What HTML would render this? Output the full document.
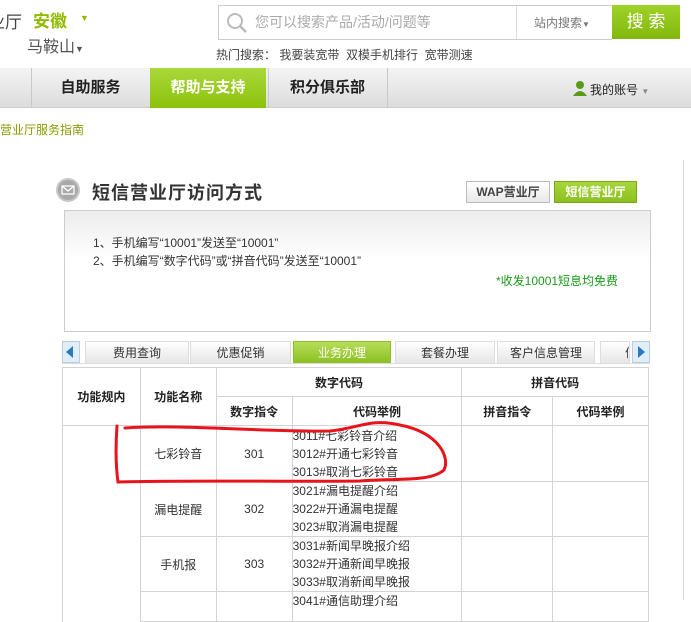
<!DOCTYPE html>
<html><head><meta charset="utf-8"><style>
*{margin:0;padding:0;box-sizing:border-box}
body{width:691px;height:600px;overflow:hidden;background:#fff;font-family:"Liberation Sans","Noto Sans CJK SC",sans-serif;font-size:12px;color:#333;position:relative}
.a{position:absolute;white-space:nowrap}
.nav{position:absolute;left:0;top:68px;width:691px;height:40px;background:linear-gradient(#f4f4f4,#dcdcdc);border-bottom:1px solid #ccc}
.nav .i{position:absolute;top:0;height:40px;line-height:40px;text-align:center;font-size:15px;font-weight:bold;color:#222}
.sep{position:absolute;top:0;width:1px;height:40px;background:#c8c8c8}
table{position:absolute;left:62px;top:367px;border-collapse:collapse;width:587px}
td{border:1px solid #d3d3d3;text-align:center;font-size:12px;color:#333}
th{border:1px solid #d3d3d3;font-size:12px;font-weight:bold;color:#222}
.c{text-align:left;line-height:18px;padding-left:0}
.tab{position:absolute;top:341px;height:22px;line-height:22px;text-align:center;font-size:12px;background:linear-gradient(#fff,#e6e6e6);border:1px solid #ddd;border-bottom:none}
</style></head><body>
<div class="a" style="left:-12px;top:8px;font-size:17px;color:#444">业厅</div>
<div class="a" style="left:33px;top:7px;font-size:17px;font-weight:bold;color:#8fbc00">安徽</div>
<div class="a" style="left:80px;top:13px;font-size:9px;color:#8fbc00">▼</div>
<div class="a" style="left:27px;top:33px;font-size:16px;color:#555">马鞍山<span style="font-size:9px">▼</span></div>

<div class="a" style="left:218px;top:5px;width:394px;height:35px;border:1px solid #ccc;border-right:none;background:#fff"></div>
<svg class="a" style="left:226px;top:12px" width="22" height="22"><circle cx="9" cy="9" r="7" fill="none" stroke="#bbb" stroke-width="2"/><line x1="14" y1="14" x2="20" y2="20" stroke="#bbb" stroke-width="2.5"/></svg>
<div class="a" style="left:255px;top:12px;font-size:14px;color:#aaa">您可以搜索产品/活动/问题等</div>
<div class="a" style="left:516px;top:6px;width:1px;height:33px;background:#ddd"></div>
<div class="a" style="left:534px;top:14px;font-size:12px;color:#777">站内搜索<span style="font-size:8px">▼</span></div>
<div class="a" style="left:612px;top:5px;width:68px;height:34px;background:linear-gradient(#9fd22a,#82b80c);color:#fff;font-size:17px;text-align:center;line-height:34px">搜 索</div>
<div class="a" style="left:216px;top:46px;font-size:12px;color:#444">热门搜索：&nbsp;我要装宽带&nbsp;&nbsp;双模手机排行&nbsp;&nbsp;宽带测速</div>

<div class="nav">
<div class="sep" style="left:31px"></div>
<div class="i" style="left:31px;width:119px">自助服务</div>
<div class="i" style="left:150px;width:116px;background:linear-gradient(#a9d83a,#8cc20c);color:#fff">帮助与支持</div>
<div class="sep" style="left:268px"></div>
<div class="i" style="left:268px;width:119px">积分俱乐部</div>
<div class="sep" style="left:387px"></div>
<svg class="a" style="left:572px;top:12px" width="16" height="16"><circle cx="8" cy="5" r="4" fill="#5a9a1a"/><path d="M1 16 Q8 6 15 16Z" fill="#5a9a1a"/></svg>
<div class="a" style="left:590px;top:13px;font-size:12px;color:#222">我的账号 <span style="font-size:8px;color:#888">▼</span></div>
</div>

<div class="a" style="left:0;top:121px;font-size:12px;color:#8a9a00">营业厅服务指南</div>
<div class="a" style="left:683px;top:160px;width:1px;height:440px;background:#ddd"></div>

<svg class="a" style="left:55px;top:177px" width="26" height="26"><circle cx="13" cy="13" r="12" fill="#c8c8c8"/><circle cx="13" cy="13" r="10" fill="#a8a8a8"/><rect x="7" y="9" width="12" height="8" fill="none" stroke="#fff" stroke-width="1.3"/><path d="M7 9 L13 14 L19 9" fill="none" stroke="#fff" stroke-width="1.3"/></svg>
<div class="a" style="left:92px;top:179px;font-size:18px;font-weight:bold;color:#333;letter-spacing:1px">短信营业厅访问方式</div>
<div class="a" style="left:466px;top:181px;width:84px;height:22px;border:1px solid #bbb;background:linear-gradient(#fff,#e8e8e8);text-align:center;line-height:20px;font-weight:bold;color:#444">WAP营业厅</div>
<div class="a" style="left:554px;top:181px;width:83px;height:22px;border:1px solid #7aa81a;background:linear-gradient(#a8d63a,#8cc020);text-align:center;line-height:20px;font-weight:bold;color:#fff">短信营业厅</div>

<div class="a" style="left:64px;top:210px;width:587px;height:122px;border:1px solid #ccc;background:linear-gradient(#ececec,#fff 40%)"></div>
<div class="a" style="left:93px;top:234px;color:#333">1、手机编写“10001”发送至“10001”</div>
<div class="a" style="left:93px;top:252px;color:#333">2、手机编写“数字代码”或“拼音代码”发送至“10001”</div>
<div class="a" style="left:496px;top:272px;color:#1a9a1a">*收发10001短息均免费</div>

<div class="a" style="left:62px;top:341px;width:18px;height:22px;background:#dfeef8;border:1px solid #bcd"></div>
<div class="a" style="left:66px;top:346px;width:0;height:0;border:6px solid transparent;border-right:7px solid #2a7ac0;border-left:none"></div>
<div class="tab" style="left:85px;width:104px">费用查询</div>
<div class="tab" style="left:190px;width:101px">优惠促销</div>
<div class="tab" style="left:293px;width:98px;background:linear-gradient(#b6de5a,#8cc020);color:#fff;border-color:#8cc020">业务办理</div>
<div class="tab" style="left:395px;width:100px">套餐办理</div>
<div class="tab" style="left:497px;width:98px">客户信息管理</div>
<div class="tab" style="left:600px;width:30px;overflow:hidden;text-align:left;padding-left:24px">信</div>
<div class="a" style="left:632px;top:341px;width:18px;height:22px;background:#dfeef8;border:1px solid #bcd"></div>
<div class="a" style="left:638px;top:346px;width:0;height:0;border:6px solid transparent;border-left:7px solid #2a7ac0;border-right:none"></div>
<div class="a" style="left:62px;top:363px;width:588px;height:1px;background:#ddd"></div>

<table>
<colgroup><col style="width:78px"><col style="width:76px"><col style="width:76px"><col style="width:170px"><col style="width:91px"><col style="width:96px"></colgroup>
<tr style="height:29px"><th rowspan="2">功能规内</th><th rowspan="2">功能名称</th><th colspan="2">数字代码</th><th colspan="2">拼音代码</th></tr>
<tr style="height:29px"><th>数字指令</th><th>代码举例</th><th>拼音指令</th><th>代码举例</th></tr>
<tr style="height:56px"><td rowspan="4" style="border-bottom:none"></td><td>七彩铃音</td><td>301</td><td class="c">3011#七彩铃音介绍<br>3012#开通七彩铃音<br>3013#取消七彩铃音</td><td></td><td></td></tr>
<tr style="height:55px"><td>漏电提醒</td><td>302</td><td class="c">3021#漏电提醒介绍<br>3022#开通漏电提醒<br>3023#取消漏电提醒</td><td></td><td></td></tr>
<tr style="height:54px"><td>手机报</td><td>303</td><td class="c">3031#新闻早晚报介绍<br>3032#开通新闻早晚报<br>3033#取消新闻早晚报</td><td></td><td></td></tr>
<tr style="height:30px"><td></td><td></td><td class="c" style="vertical-align:top">3041#通信助理介绍</td><td></td><td></td></tr>
</table>

<svg class="a" style="left:0;top:0" width="691" height="600"><path d="M125 428 C180 424 260 432 330 431 C360 428 370 418 400 425 C440 433 450 458 444 470 C430 482 400 478 360 481 C280 482 200 480 118 482 C115 460 116 440 117 426" fill="none" stroke="#e8141c" stroke-width="3" stroke-linecap="round"/></svg>
</body></html>
